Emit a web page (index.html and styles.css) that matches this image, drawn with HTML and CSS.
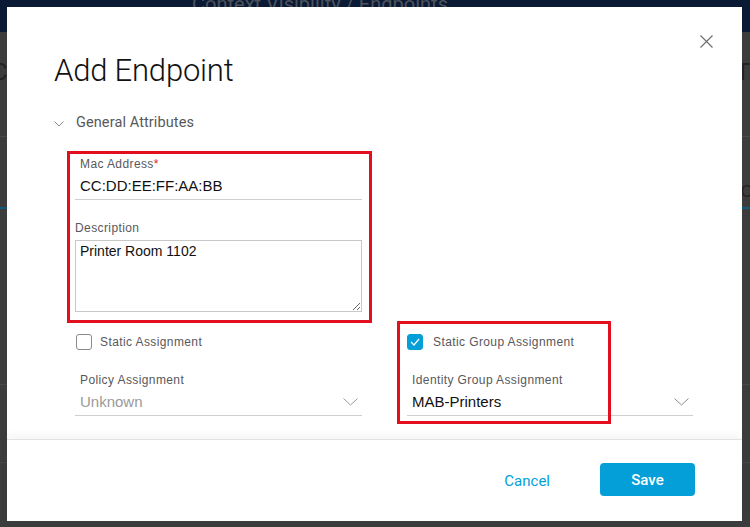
FILE: index.html
```html
<!DOCTYPE html>
<html lang="en">
<head>
    <meta charset="UTF-8">
    <title>Add Endpoint</title>
    <link rel="stylesheet" href="styles.css">
</head>
<body>
    <div class="page">
        <div class="topbar">
            <span class="topbar-title">Context Visibility / Endpoints</span>
        </div>
        <div class="page-head">
            <span class="page-title">Context</span>
            <span class="page-tool">Tool</span>
        </div>
        <div class="page-tabs">
            <span class="tab">Con</span>
        </div>
        <div class="page-rows"></div>
    </div>

    <div class="modal">
        <button class="close" aria-label="Close">
            <svg width="13" height="13" viewBox="0 0 13 13"><path d="M0.5 0.5 L12.5 12.5 M12.5 0.5 L0.5 12.5" stroke="#6b6b6b" stroke-width="1.1" fill="none"/></svg>
        </button>

        <div class="modal-body">
            <h1>Add Endpoint</h1>

            <div class="section-head">
                <svg width="10" height="6" viewBox="0 0 10 6"><path d="M0.5 0.5 L5 5 L9.5 0.5" stroke="#8a8a8a" stroke-width="1" fill="none"/></svg>
                <span>General Attributes</span>
            </div>

            <div class="form">
                <div class="top-fields">
                    <div class="field">
                        <label class="field-label">Mac Address<span class="req">*</span></label>
                        <div class="field-value">CC:DD:EE:FF:AA:BB</div>
                    </div>

                    <label class="desc-label">Description</label>
                    <textarea class="desc" readonly>Printer Room 1102</textarea>
                </div>

                <div class="assign-grid">
                    <div class="check-row">
                        <span class="checkbox"></span>
                        <span>Static Assignment</span>
                    </div>
                    <div class="check-row right">
                        <span class="checkbox checked">
                            <svg width="10" height="8" viewBox="0 0 10 8"><path d="M1 4 L4 7 L9 1" stroke="#fff" stroke-width="1.2" fill="none"/></svg>
                        </span>
                        <span>Static Group Assignment</span>
                    </div>

                    <div class="field select">
                        <label class="field-label">Policy Assignment</label>
                        <div class="field-value muted">
                            Unknown
                            <svg width="15" height="8" viewBox="0 0 15 8"><path d="M0.5 0.5 L7.5 7 L14.5 0.5" stroke="#9a9a9a" stroke-width="1" fill="none"/></svg>
                        </div>
                    </div>
                    <div class="field select">
                        <label class="field-label">Identity Group Assignment</label>
                        <div class="field-value">
                            MAB-Printers
                            <svg width="15" height="8" viewBox="0 0 15 8"><path d="M0.5 0.5 L7.5 7 L14.5 0.5" stroke="#8a8a8a" stroke-width="1" fill="none"/></svg>
                        </div>
                    </div>
                </div>
            </div>

            <!-- annotation boxes -->
            <div class="mark mark-left"></div>
            <div class="mark mark-right"></div>
        </div>

        <div class="modal-footer">
            <button class="btn-link">Cancel</button>
            <button class="btn-primary">Save</button>
        </div>
    </div>
</body>
</html>
```

FILE: styles.css
```css
body {
    margin: 0;
    width: 750px;
    height: 527px;
    overflow: hidden;
    background: #3c3c3c;
    font-family: "Liberation Sans", Arial, sans-serif;
    position: relative;
}
.page {
    height: 527px;
}
.topbar {
    height: 32px;
    background: #0b1a34;
    display: flex;
    justify-content: center;
    overflow: hidden;
}
.topbar-title {
    font-family: Roboto, sans-serif;
    font-size: 20px;
    line-height: 20px;
    margin-top: -6px;
    margin-left: -110px;
    color: #4d525c;
}
.page-head {
    height: 104px;
    display: flex;
    justify-content: space-between;
    align-items: center;
    border-bottom: 1px solid #4a4a4a;
    font-family: Roboto, sans-serif;
    font-size: 24px;
    color: #222;
}
.page-title {
    margin-left: -8px;
    margin-top: -25px;
}
.page-tool {
    margin-right: -32px;
    margin-top: -25px;
}
.page-tabs {
    height: 70px;
    display: flex;
    justify-content: flex-end;
    align-items: flex-end;
    border-bottom: 2px solid #0b5d7a;
}
.tab {
    font-size: 16px;
    color: #222;
    margin-right: -20px;
    margin-bottom: 6px;
}
.page-rows {
    margin-top: 175px;
    height: 77px;
    border-top: 1px solid #484848;
    border-bottom: 1px solid #484848;
}

.modal {
    position: absolute;
    left: 7px;
    top: 7px;
    width: 735px;
    height: 514px;
    background: #fff;
    display: flex;
    flex-direction: column;
}
.close {
    position: absolute;
    top: 28px;
    left: 693px;
    padding: 0;
    border: none;
    background: none;
    line-height: 0;
}
.modal-body {
    position: relative;
    flex: 1;
    padding: 0 47px;
}
h1 {
    margin: 46px 0 0;
    font-family: Roboto, sans-serif;
    font-weight: 300;
    font-size: 31px;
    line-height: 36px;
    color: #111;
    letter-spacing: -0.2px;
}
.section-head {
    margin-top: 24px;
    display: flex;
    align-items: center;
    gap: 12px;
    font-family: Roboto, sans-serif;
    font-size: 14.5px;
    line-height: 20px;
    letter-spacing: 0.1px;
    color: #58585b;
}
.section-head svg {
    margin-top: 2px;
}
.form {
    margin-top: 23px;
    margin-left: 21px;
}
.top-fields {
    width: 287px;
}
.assign-grid {
    display: grid;
    grid-template-columns: 287px 286px;
    column-gap: 45px;
}
.field-label {
    display: block;
    padding-left: 5px;
    font-size: 12px;
    line-height: 16px;
    letter-spacing: 0.4px;
    color: #58585b;
}
.req {
    color: #e2231a;
}
.field-value {
    display: flex;
    justify-content: space-between;
    align-items: center;
    margin-top: 4px;
    padding: 0 4px 3px 5px;
    height: 20px;
    font-size: 15px;
    line-height: 20px;
    color: #111;
    border-bottom: 1px solid #cfcfcf;
}
.muted {
    color: #9a9a9a;
}
.desc-label {
    display: block;
    margin-top: 20px;
    font-size: 12px;
    line-height: 16px;
    letter-spacing: 0.4px;
    color: #58585b;
}
.desc {
    display: block;
    box-sizing: border-box;
    margin-top: 4px;
    width: 287px;
    height: 72px;
    padding: 2px 4px;
    border: 1px solid #c8c8c8;
    border-radius: 0;
    font-family: "Liberation Sans", Arial, sans-serif;
    font-size: 14px;
    line-height: 16px;
    color: #111;
    resize: both;
    outline: none;
}
.check-row {
    margin-top: 22px;
    display: flex;
    align-items: center;
    gap: 8px;
    padding-left: 1px;
    font-size: 12px;
    line-height: 16px;
    letter-spacing: 0.4px;
    color: #58585b;
}
.check-row.right {
    padding-left: 0;
    gap: 10px;
}
.checkbox {
    box-sizing: border-box;
    width: 16px;
    height: 16px;
    border: 1px solid #8a8a8a;
    border-radius: 3px;
    display: flex;
    align-items: center;
    justify-content: center;
}
.checkbox.checked {
    background: #049fd9;
    border-color: #049fd9;
}
.select {
    margin-top: 22px;
}

.mark {
    position: absolute;
    border: 3px solid #e2101e;
}
.mark-left {
    left: 60px;
    top: 144px;
    width: 299px;
    height: 166px;
}
.mark-right {
    left: 390px;
    top: 314px;
    width: 208px;
    height: 97px;
}

.modal-footer {
    height: 81px;
    border-top: 1px solid #e2e2e2;
    box-shadow: 0 -5px 8px rgba(0, 0, 0, 0.04);
    display: flex;
    justify-content: flex-end;
    align-items: center;
    gap: 50px;
    padding-right: 47px;
}
.btn-link {
    border: none;
    background: none;
    padding: 0;
    font-family: Roboto, sans-serif;
    font-size: 15px;
    color: #049fd9;
}
.btn-primary {
    width: 95px;
    height: 33px;
    margin-top: -2px;
    border: none;
    border-radius: 4px;
    background: #049fd9;
    color: #fff;
    font-family: Roboto, sans-serif;
    font-size: 15px;
    font-weight: 500;
}
```
